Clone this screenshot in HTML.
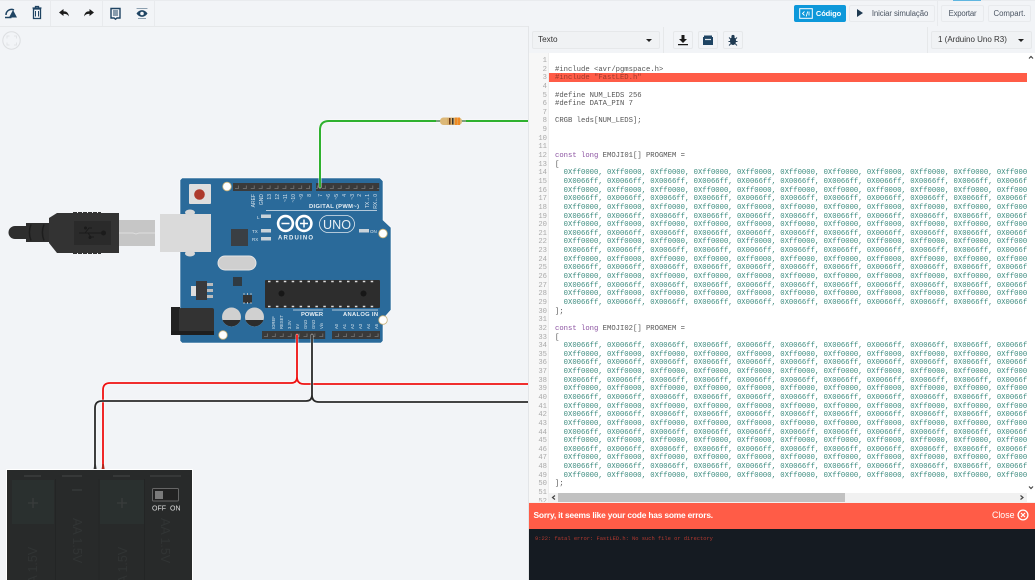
<!DOCTYPE html>
<html lang="pt"><head><meta charset="utf-8"><title>Circuit</title>
<style>
html,body{margin:0;padding:0;width:1035px;height:580px;overflow:hidden;background:#f2f4f7;font-family:"Liberation Sans",sans-serif}
.a{position:absolute;box-sizing:border-box}
.btn{position:absolute;box-sizing:border-box;top:5px;height:17px;background:#f2f4f7;border:1px solid #e8eaed;border-radius:2px;font-size:7.8px;line-height:15px;text-align:center;color:#4b5563;white-space:nowrap}
.sel{position:absolute;box-sizing:border-box;top:31px;height:18px;background:#f0f2f4;border:1px solid #e6e8ea;border-radius:2px;font-size:8.2px;line-height:16px;color:#333;padding-left:5px}
.sel i{position:absolute;right:7px;top:7px;border:3px solid transparent;border-top:3px solid #222;border-bottom:0}
.tb{position:absolute;box-sizing:border-box;top:31px;width:20px;height:18px;background:#f2f4f7;border:1px solid #e6e8ea;border-radius:2px}
#code{position:absolute;left:555px;top:57px;width:472px;height:445px;overflow:hidden;font:7.23px/8.64px "Liberation Mono",monospace;color:#555;white-space:pre;margin:0}
#nums{position:absolute;left:529px;top:57px;width:18px;height:445px;overflow:hidden;font:7.23px/8.64px "Liberation Mono",monospace;color:#a9a9a9;text-align:right;white-space:pre;margin:0}
#code b{font-weight:normal;color:#8b52a1}
#code u{text-decoration:none;color:#3a8a7d}
</style></head><body>

<!-- canvas drawing -->
<svg class="a" style="left:0;top:0" width="528" height="580" viewBox="0 0 528 580">
<defs>
<pattern id="pn" x="233" y="183" width="7.9" height="8" patternUnits="userSpaceOnUse"><rect width="7.9" height="8" fill="#3a3a3a"/><path d="M2 5.5h3.5v-3" stroke="#777" stroke-width=".8" fill="none"/></pattern>
<pattern id="pb" x="262" y="331" width="7.9" height="8" patternUnits="userSpaceOnUse"><rect width="7.9" height="8" fill="#3a3a3a"/><path d="M2 5.5h3.5v-3" stroke="#777" stroke-width=".8" fill="none"/></pattern>
</defs>
<circle cx="11.5" cy="40.5" r="8.7" fill="none" stroke="#dcdee1" stroke-width="1"/>
<path d="M7 38.5v-2.5h2.5M14 36h2.5v2.5M16.500 42.500v2.500h-2.500M9.500 45h-2.500v-2.500" fill="none" stroke="#e2e4e7" stroke-width="1"/>

<!-- USB cable -->
<path d="M26 226h-11a6.500 6.500 0 0 0 0 13h11z" fill="#2e2e2e"/>
<rect x="26" y="223" width="24" height="19" fill="#2e2e2e"/>
<path d="M31 224.500c-2 5-2 11 0 16M44 224.500c-2 5-2 11 0 16" stroke="#1d1d1d" stroke-width="1.500" fill="none"/>
<rect x="119" y="220" width="36" height="26" fill="#c6c6c6"/>
<path d="M119 233h14l3 1 3-1h16" stroke="#ddd" stroke-width="1" fill="none"/>
<path d="M49 218l8-5h62v40H57l-8-10z" fill="#333"/>
<rect x="74" y="221" width="37" height="24" fill="#2a2a2a"/>
<path d="M79 233h24M85 233l4-5h3M88 233l3 4h3" stroke="#1b1b1b" stroke-width="1" fill="none"/><circle cx="103.500" cy="233" r="2.500" fill="#1b1b1b"/><circle cx="85.500" cy="228" r="1.500" fill="#1b1b1b"/><circle cx="90" cy="237.500" r="1.500" fill="#1b1b1b"/>
<path d="M73 213h4v-1h-4zM78 213h4v-1h-4zM83 213h4v-1h-4zM88 213h4v-1h-4zM93 213h4v-1h-4zM98 213h3v-1h-3zM73 254h4v-1h-4zM78 254h4v-1h-4zM83 254h4v-1h-4zM88 254h4v-1h-4zM93 254h4v-1h-4zM98 254h3v-1h-3z" fill="#333"/>

<!-- board -->
<path d="M182 178H380l3 3v39l8 7.500V310l-8 9v22l-2 2H182l-2-2V180z" fill="#2a6a9a" stroke="#fff" stroke-width=".6"/>
<rect x="160" y="214" width="51" height="38" fill="#dadada"/>
<ellipse cx="190" cy="212.500" rx="5" ry="3" fill="#d8d8d8"/><ellipse cx="190" cy="253.500" rx="5" ry="3" fill="#d8d8d8"/>
<rect x="189" y="184" width="22" height="20" rx="1" fill="#dedede"/><circle cx="199.500" cy="194.500" r="5.300" fill="#ad3a2c"/>
<circle cx="227" cy="186.500" r="4.300" fill="#fff" stroke="#c9b27a" stroke-width=".8"/>
<circle cx="383" cy="233.500" r="4.300" fill="#fff" stroke="#c9b27a" stroke-width=".8"/>
<circle cx="383" cy="320" r="4.300" fill="#fff" stroke="#c9b27a" stroke-width=".8"/>
<circle cx="223" cy="335" r="4.300" fill="#fff" stroke="#c9b27a" stroke-width=".8"/>
<rect x="233" y="183" width="79" height="8" fill="url(#pn)"/>
<rect x="316" y="183" width="63.200" height="8" fill="url(#pn)"/>
<rect x="262" y="331" width="63.200" height="8" fill="url(#pb)"/>
<rect x="332" y="331" width="48" height="8" fill="url(#pb)"/>
<g fill="#d8e4ec" font-family="Liberation Sans" font-size="5">
<g text-anchor="end">
<text transform="translate(255,194) rotate(-90)">AREF</text><text transform="translate(263,194) rotate(-90)">GND</text>
<text transform="translate(271,194) rotate(-90)">13</text><text transform="translate(279,194) rotate(-90)">12</text>
<text transform="translate(287,194) rotate(-90)">~11</text><text transform="translate(295,194) rotate(-90)">~10</text>
<text transform="translate(303,194) rotate(-90)">~9</text><text transform="translate(311,194) rotate(-90)">8</text>
<text transform="translate(322,194) rotate(-90)">7</text><text transform="translate(330,194) rotate(-90)">~6</text>
<text transform="translate(338,194) rotate(-90)">~5</text><text transform="translate(346,194) rotate(-90)">4</text>
<text transform="translate(354,194) rotate(-90)">~3</text><text transform="translate(361,194) rotate(-90)">2</text>
<text transform="translate(369,194) rotate(-90)">TX→1</text><text transform="translate(377,194) rotate(-90)">RX←0</text>
</g>
<g font-size="4.200">
<text transform="translate(275,329) rotate(-90)">IOREF</text><text transform="translate(283,329) rotate(-90)">RESET</text>
<text transform="translate(291,329) rotate(-90)">3.3V</text><text transform="translate(299,329) rotate(-90)">5V</text>
<text transform="translate(307,329) rotate(-90)">GND</text><text transform="translate(315,329) rotate(-90)">GND</text>
<text transform="translate(323,329) rotate(-90)">Vin</text>
<text transform="translate(338,329) rotate(-90)">A0</text><text transform="translate(346,329) rotate(-90)">A1</text>
<text transform="translate(354,329) rotate(-90)">A2</text><text transform="translate(362,329) rotate(-90)">A3</text>
<text transform="translate(370,329) rotate(-90)">A4</text><text transform="translate(378,329) rotate(-90)">A5</text>
</g>
<text x="257" y="219" font-size="4.500">L</text><text x="252" y="233" font-size="4.500">TX</text><text x="252" y="241" font-size="4.500">RX</text><text x="370" y="233" font-size="4.500">ON</text>
</g>
<g fill="#e8eff4" font-family="Liberation Sans" font-weight="bold">
<text x="309" y="208" font-size="5.800" textLength="50">DIGITAL (PWM~)</text>
<text x="301" y="316" font-size="5.800" textLength="22">POWER</text>
<text x="343" y="316" font-size="5.800" textLength="35">ANALOG IN</text>
<text x="278" y="239.500" font-size="6" textLength="35">ARDUINO</text>
</g>
<path d="M266 210.500h111M293 310h30M332 310h46" stroke="#dfe8ee" stroke-width=".8"/>
<g fill="none" stroke="#fff" stroke-width="2.600"><circle cx="285.500" cy="223.500" r="7.400"/><circle cx="304" cy="223.500" r="7.400"/></g>
<path d="M281.500 223.500h8M300 223.500h8M304 219.500v8" stroke="#fff" stroke-width="1.500"/>
<rect x="319.500" y="215.500" width="35" height="17" rx="8.500" fill="none" stroke="#dfe8ee" stroke-width=".8"/>
<text x="323" y="229" font-family="Liberation Sans" font-size="13" fill="#e8eff4" textLength="28" lengthAdjust="spacingAndGlyphs">UNO</text>
<rect x="261" y="214.500" width="10" height="3.500" fill="#c9d3da"/><rect x="261" y="229" width="10" height="3.500" fill="#c9d3da"/><rect x="261" y="237" width="10" height="3.500" fill="#c9d3da"/><rect x="359" y="229" width="10" height="3.500" fill="#c9d3da"/>
<rect x="231" y="229" width="17" height="17" fill="#3a3f44"/>
<rect x="218" y="256" width="38" height="14" rx="7" fill="#cfcfcf" stroke="#e4e4e4"/>
<rect x="233" y="277" width="9" height="9" fill="#2f3a42"/>
<rect x="191" y="286" width="6" height="10" fill="#ddd"/><rect x="196" y="281" width="11" height="19" fill="#39393b"/>
<rect x="207" y="283" width="6" height="3" fill="#bbb"/><rect x="207" y="289" width="6" height="3" fill="#bbb"/><rect x="207" y="295" width="6" height="3" fill="#bbb"/>
<rect x="243" y="295" width="9" height="8" fill="#333"/>
<path d="M244 293v11M247.500 293v11M251 293v11" stroke="#ccc" stroke-width=".8" stroke-dasharray="2 7"/>
<rect x="171" y="307" width="9" height="28" fill="#222"/><rect x="179" y="308" width="35" height="26" rx="2" fill="#333"/><rect x="171" y="331" width="43" height="4" fill="#1e1e1e"/>
<circle cx="231.500" cy="317" r="9.500" fill="#d0d0d0"/><path d="M222.500 320a9.500 9.500 0 0 0 18 0z" fill="#2c2c2c"/>
<circle cx="254.500" cy="317" r="9.500" fill="#d0d0d0"/><path d="M245.500 320a9.500 9.500 0 0 0 18 0z" fill="#2c2c2c"/>
<rect x="265" y="280" width="115" height="28" rx="1" fill="#2d2d2d"/>
<path d="M268 281.500H378M268 306.500H378" stroke="#ddd" stroke-width="1.500" stroke-dasharray="2.500 5.400"/>
<circle cx="281.500" cy="293.500" r="3" fill="#171717"/><circle cx="363.500" cy="293.500" r="3" fill="#171717"/>

<!-- wires -->
<g fill="none" stroke-linecap="round">
<path d="M320 187V130q0-9 9-9H441M462 121H528" stroke="#fff" stroke-width="2.800"/>
<path d="M320 187V130q0-9 9-9H441M462 121H528" stroke="#2fb12f" stroke-width="2"/>
<path d="M297 335V377q0 6-6 6H110q-7 0-7 7V470M297 377q0 7 7 7H528" stroke="#fff" stroke-width="2.600"/>
<path d="M297 335V377q0 6-6 6H110q-7 0-7 7V470M297 377q0 7 7 7H528" stroke="#ee1111" stroke-width="1.800"/>
<path d="M312 335V395q0 6-6 6H102q-7 0-7 7V470M312 395q0 7 7 7H528" stroke="#fff" stroke-width="2.600"/>
<path d="M312 335V395q0 6-6 6H102q-7 0-7 7V470M312 395q0 7 7 7H528" stroke="#2a2a2a" stroke-width="1.800"/>
</g>
<!-- resistor -->
<path d="M436 121h30" stroke="#9a9a9a" stroke-width="1.400"/>
<rect x="440" y="117.500" width="22" height="7.500" rx="3.500" fill="#dcb878"/>
<rect x="447" y="118" width="8" height="6.500" fill="#d6ad6a"/>
<rect x="449" y="118" width="1.500" height="6.500" fill="#6b3a1a"/><rect x="452" y="118" width="1.500" height="6.500" fill="#333"/><rect x="455" y="117.500" width="2.500" height="7.500" fill="#f08a24"/><rect x="458" y="117.500" width="2" height="7.500" fill="#f08a24"/>

<!-- battery -->
<path d="M93.500 470l.8-6h1.600l.8 6z" fill="#333"/><path d="M101.500 470l.8-6h1.600l.8 6z" fill="#b3271c"/>
<rect x="6.500" y="469.500" width="186" height="112" fill="#282a2a" stroke="#fff" stroke-width="1"/>
<rect x="12" y="480" width="42" height="44" fill="#2a302f"/><rect x="100" y="480" width="44" height="44" fill="#2a302f"/>
<path d="M55.500 479V580M99 479V580M144.500 479V580" stroke="#232525" stroke-width="1"/>
<path d="M24 476h17M62 476h20M113 476h17M150 476h31" stroke="#3b3d3d" stroke-width="1.500"/>
<path d="M33 498v10M28 503h10M122 498v10M117 503h10M72 490h10" stroke="#393c3c" stroke-width="1.300"/>
<g fill="#313434" font-family="Liberation Sans" font-size="12.500">
<text transform="translate(73,518) rotate(90)">AA 1.5V</text>
<text transform="translate(161,518) rotate(90)">AA 1.5V</text>
<text transform="translate(37,592) rotate(-90)">AA 1.5V</text>
<text transform="translate(127,592) rotate(-90)">AA 1.5V</text>
</g>
<rect x="152.500" y="488.500" width="26" height="12.500" rx="1" fill="#222" stroke="#666" stroke-width="1"/>
<rect x="155" y="491" width="8" height="8" fill="#7a7a7a"/>
<text x="152" y="510.500" font-family="Liberation Sans" font-size="7" fill="#ddd">OFF</text>
<text x="170" y="510.500" font-family="Liberation Sans" font-size="7" fill="#ddd">ON</text>
</svg>

<!-- top toolbar -->
<div class="a" style="left:0;top:0;width:1035px;height:1px;background:#e9ebee"></div>
<div class="a" style="left:0;top:26px;width:528px;height:1px;background:#e6e8ea"></div>
<div class="a" style="left:50px;top:1px;width:1px;height:25px;background:#e8eaed"></div>
<div class="a" style="left:102px;top:1px;width:1px;height:25px;background:#e8eaed"></div>
<div class="a" style="left:154px;top:1px;width:1px;height:25px;background:#e8eaed"></div>
<svg class="a" style="left:0;top:0" width="160" height="26" viewBox="0 0 160 26">
<path d="M5 17.500h6.500M6 15a5.500 5.500 0 0 1 8-5" fill="none" stroke="#1f4463" stroke-width="1.500"/><path d="M9 17.500l4-7.500 4 7.500z" fill="#1f4463"/>
<path d="M33.500 9h7v9.500h-7zM32.500 8h9M35.500 8V6.500h3V8" fill="none" stroke="#1f4463" stroke-width="1.300"/><path d="M35.500 11v5.500M38.500 11v5.500" stroke="#1f4463"/>
<path d="M59 12.500l4.500-3.500v2.200c3 0 5 1.500 5.500 5.300-1.300-2-3-2.600-5.500-2.600V16z" fill="#1b1b1b"/>
<path d="M94 12.500L89.500 9v2.200c-3 0-5 1.500-5.500 5.300 1.300-2 3-2.600 5.500-2.600V16z" fill="#1b1b1b"/>
<path d="M111 8.500h9v9.500h-3l-1.500 1.200-1.500-1.200h-3z" fill="none" stroke="#1f4463" stroke-width="1.400"/><path d="M113 11h5M113 13h5M113 15h5" stroke="#1f4463" stroke-width=".9"/>
<path d="M136.500 13.500c3-4.500 8-4.500 11 0-3 4.500-8 4.500-11 0z" fill="#1f4463"/><circle cx="142" cy="13.500" r="1.800" fill="#f2f4f7"/>
<path d="M137 9v-.5h10V9M138 18.500h8" stroke="#8da0b0" stroke-width=".9" fill="none"/>
</svg>

<div class="a" style="left:953px;top:0;width:28px;height:1px;background:#5fb6e0"></div>
<div class="btn" style="left:794px;width:52px;background:#0d98da;border-color:#0d98da;color:#fff;font-weight:bold;font-size:7.5px;letter-spacing:-.1px;padding-left:17px">Código</div>
<svg class="a" style="left:799px;top:8px" width="14" height="11" viewBox="0 0 14 11"><rect x=".7" y=".7" width="12.600" height="9.600" fill="none" stroke="#fff" stroke-width="1"/><path d="M5.500 3.500L3.500 5.500l2 2M8.700 3.500l-1.500 5M10 3.500v4" fill="none" stroke="#fff" stroke-width=".9"/></svg>
<div class="btn" style="left:849px;width:86px;padding-left:16px;font-size:7.8px;letter-spacing:-.1px">Iniciar simulação</div>
<div class="a" style="left:857px;top:9px;border-left:6px solid #1f3a52;border-top:4.500px solid transparent;border-bottom:4.500px solid transparent"></div>
<div class="a" style="left:937px;top:1px;width:1px;height:25px;background:#e8eaed"></div>
<div class="btn" style="left:941px;width:43px;letter-spacing:-.2px">Exportar</div>
<div class="btn" style="left:988px;width:43px">Compart.</div>

<!-- code panel -->
<div class="a" style="left:528px;top:26px;width:1px;height:554px;background:#e3e5e8"></div>
<div class="a" style="left:529px;top:27px;width:506px;height:26px;background:#f2f4f7"></div>
<div class="sel" style="left:532px;width:128px">Texto<i></i></div>
<div class="a" style="left:663px;top:27px;width:1px;height:26px;background:#e6e8ea"></div>
<div class="tb" style="left:673px"></div><div class="tb" style="left:698px"></div><div class="tb" style="left:723px"></div>
<svg class="a" style="left:673px;top:31px" width="70" height="18" viewBox="0 0 70 18">
<path d="M8.500 4h3v4h2.500L10 12 6 8h2.500zM5 13h10v1.300H5z" fill="#1a1a1a"/>
<path d="M30 6h10v8H30z" fill="#1f4463"/><path d="M31 4.500h8V6h-8z" fill="#1f4463"/><path d="M32 8.500h6" stroke="#dfe5ea" stroke-width="1.200"/>
<ellipse cx="60" cy="10" rx="3" ry="4" fill="#1f3a52"/><circle cx="60" cy="5.500" r="1.600" fill="#1f3a52"/>
<path d="M56 6.500l2 2M64 6.500l-2 2M55.500 10.500h2M64.500 10.500h-2M56 14.500l2-2M64 14.500l-2-2" stroke="#1f3a52" stroke-width=".9"/>
</svg>
<div class="a" style="left:927px;top:27px;width:1px;height:26px;background:#e6e8ea"></div>
<div class="sel" style="left:931px;width:101px;padding-left:6px;font-size:8px">1 (Arduino Uno R3)<i></i></div>

<div class="a" style="left:529px;top:53px;width:506px;height:449px;background:#fff"></div>
<div class="a" style="left:529px;top:53px;width:20px;height:449px;background:#f7f7f7;border-right:1px solid #eee"></div>
<div class="a" style="left:549px;top:72.800px;width:478px;height:9px;background:#ff5c47"></div>

<pre id="nums">1
2
3
4
5
6
7
8
9
10
11
12
13
14
15
16
17
18
19
20
21
22
23
24
25
26
27
28
29
30
31
32
33
34
35
36
37
38
39
40
41
42
43
44
45
46
47
48
49
50
51
52</pre>

<pre id="code">

#include &lt;avr/pgmspace.h&gt;
<span style="color:#9a3a2c">#include "FastLED.h"</span>

#define NUM_LEDS 256
#define DATA_PIN 7

CRGB leds[NUM_LEDS];



<b>const long</b> EMOJI01[] PROGMEM =
[
<u>  0Xff0000, 0Xff0000, 0Xff0000, 0Xff0000, 0Xff0000, 0Xff0000, 0Xff0000, 0Xff0000, 0Xff0000, 0Xff0000, 0Xff0000,</u>
<u>  0X0066ff, 0X0066ff, 0X0066ff, 0X0066ff, 0X0066ff, 0X0066ff, 0X0066ff, 0X0066ff, 0X0066ff, 0X0066ff, 0X0066ff,</u>
<u>  0Xff0000, 0Xff0000, 0Xff0000, 0Xff0000, 0Xff0000, 0Xff0000, 0Xff0000, 0Xff0000, 0Xff0000, 0Xff0000, 0Xff0000,</u>
<u>  0X0066ff, 0X0066ff, 0X0066ff, 0X0066ff, 0X0066ff, 0X0066ff, 0X0066ff, 0X0066ff, 0X0066ff, 0X0066ff, 0X0066ff,</u>
<u>  0Xff0000, 0Xff0000, 0Xff0000, 0Xff0000, 0Xff0000, 0Xff0000, 0Xff0000, 0Xff0000, 0Xff0000, 0Xff0000, 0Xff0000,</u>
<u>  0X0066ff, 0X0066ff, 0X0066ff, 0X0066ff, 0X0066ff, 0X0066ff, 0X0066ff, 0X0066ff, 0X0066ff, 0X0066ff, 0X0066ff,</u>
<u>  0Xff0000, 0Xff0000, 0Xff0000, 0Xff0000, 0Xff0000, 0Xff0000, 0Xff0000, 0Xff0000, 0Xff0000, 0Xff0000, 0Xff0000,</u>
<u>  0X0066ff, 0X0066ff, 0X0066ff, 0X0066ff, 0X0066ff, 0X0066ff, 0X0066ff, 0X0066ff, 0X0066ff, 0X0066ff, 0X0066ff,</u>
<u>  0Xff0000, 0Xff0000, 0Xff0000, 0Xff0000, 0Xff0000, 0Xff0000, 0Xff0000, 0Xff0000, 0Xff0000, 0Xff0000, 0Xff0000,</u>
<u>  0X0066ff, 0X0066ff, 0X0066ff, 0X0066ff, 0X0066ff, 0X0066ff, 0X0066ff, 0X0066ff, 0X0066ff, 0X0066ff, 0X0066ff,</u>
<u>  0Xff0000, 0Xff0000, 0Xff0000, 0Xff0000, 0Xff0000, 0Xff0000, 0Xff0000, 0Xff0000, 0Xff0000, 0Xff0000, 0Xff0000,</u>
<u>  0X0066ff, 0X0066ff, 0X0066ff, 0X0066ff, 0X0066ff, 0X0066ff, 0X0066ff, 0X0066ff, 0X0066ff, 0X0066ff, 0X0066ff,</u>
<u>  0Xff0000, 0Xff0000, 0Xff0000, 0Xff0000, 0Xff0000, 0Xff0000, 0Xff0000, 0Xff0000, 0Xff0000, 0Xff0000, 0Xff0000,</u>
<u>  0X0066ff, 0X0066ff, 0X0066ff, 0X0066ff, 0X0066ff, 0X0066ff, 0X0066ff, 0X0066ff, 0X0066ff, 0X0066ff, 0X0066ff,</u>
<u>  0Xff0000, 0Xff0000, 0Xff0000, 0Xff0000, 0Xff0000, 0Xff0000, 0Xff0000, 0Xff0000, 0Xff0000, 0Xff0000, 0Xff0000,</u>
<u>  0X0066ff, 0X0066ff, 0X0066ff, 0X0066ff, 0X0066ff, 0X0066ff, 0X0066ff, 0X0066ff, 0X0066ff, 0X0066ff, 0X0066ff,</u>
];

<b>const long</b> EMOJI02[] PROGMEM =
[
<u>  0X0066ff, 0X0066ff, 0X0066ff, 0X0066ff, 0X0066ff, 0X0066ff, 0X0066ff, 0X0066ff, 0X0066ff, 0X0066ff, 0X0066ff,</u>
<u>  0Xff0000, 0Xff0000, 0Xff0000, 0Xff0000, 0Xff0000, 0Xff0000, 0Xff0000, 0Xff0000, 0Xff0000, 0Xff0000, 0Xff0000,</u>
<u>  0X0066ff, 0X0066ff, 0X0066ff, 0X0066ff, 0X0066ff, 0X0066ff, 0X0066ff, 0X0066ff, 0X0066ff, 0X0066ff, 0X0066ff,</u>
<u>  0Xff0000, 0Xff0000, 0Xff0000, 0Xff0000, 0Xff0000, 0Xff0000, 0Xff0000, 0Xff0000, 0Xff0000, 0Xff0000, 0Xff0000,</u>
<u>  0X0066ff, 0X0066ff, 0X0066ff, 0X0066ff, 0X0066ff, 0X0066ff, 0X0066ff, 0X0066ff, 0X0066ff, 0X0066ff, 0X0066ff,</u>
<u>  0Xff0000, 0Xff0000, 0Xff0000, 0Xff0000, 0Xff0000, 0Xff0000, 0Xff0000, 0Xff0000, 0Xff0000, 0Xff0000, 0Xff0000,</u>
<u>  0X0066ff, 0X0066ff, 0X0066ff, 0X0066ff, 0X0066ff, 0X0066ff, 0X0066ff, 0X0066ff, 0X0066ff, 0X0066ff, 0X0066ff,</u>
<u>  0Xff0000, 0Xff0000, 0Xff0000, 0Xff0000, 0Xff0000, 0Xff0000, 0Xff0000, 0Xff0000, 0Xff0000, 0Xff0000, 0Xff0000,</u>
<u>  0X0066ff, 0X0066ff, 0X0066ff, 0X0066ff, 0X0066ff, 0X0066ff, 0X0066ff, 0X0066ff, 0X0066ff, 0X0066ff, 0X0066ff,</u>
<u>  0Xff0000, 0Xff0000, 0Xff0000, 0Xff0000, 0Xff0000, 0Xff0000, 0Xff0000, 0Xff0000, 0Xff0000, 0Xff0000, 0Xff0000,</u>
<u>  0X0066ff, 0X0066ff, 0X0066ff, 0X0066ff, 0X0066ff, 0X0066ff, 0X0066ff, 0X0066ff, 0X0066ff, 0X0066ff, 0X0066ff,</u>
<u>  0Xff0000, 0Xff0000, 0Xff0000, 0Xff0000, 0Xff0000, 0Xff0000, 0Xff0000, 0Xff0000, 0Xff0000, 0Xff0000, 0Xff0000,</u>
<u>  0X0066ff, 0X0066ff, 0X0066ff, 0X0066ff, 0X0066ff, 0X0066ff, 0X0066ff, 0X0066ff, 0X0066ff, 0X0066ff, 0X0066ff,</u>
<u>  0Xff0000, 0Xff0000, 0Xff0000, 0Xff0000, 0Xff0000, 0Xff0000, 0Xff0000, 0Xff0000, 0Xff0000, 0Xff0000, 0Xff0000,</u>
<u>  0X0066ff, 0X0066ff, 0X0066ff, 0X0066ff, 0X0066ff, 0X0066ff, 0X0066ff, 0X0066ff, 0X0066ff, 0X0066ff, 0X0066ff,</u>
<u>  0Xff0000, 0Xff0000, 0Xff0000, 0Xff0000, 0Xff0000, 0Xff0000, 0Xff0000, 0Xff0000, 0Xff0000, 0Xff0000, 0Xff0000,</u>
];
</pre>

<!-- scrollbars -->
<div class="a" style="left:549px;top:493px;width:478px;height:9px;background:#f1f1f1"></div>
<div class="a" style="left:558px;top:493px;width:287px;height:9px;background:#c1c1c1"></div>
<svg class="a" style="left:549px;top:493px" width="486" height="9" viewBox="0 0 486 9"><path d="M6 2.500L3.500 4.500 6 6.500M471.500 2.500L474 4.500 471.500 6.500" fill="none" stroke="#444" stroke-width="1.200"/></svg>
<div class="a" style="left:1027px;top:53px;width:8px;height:449px;background:#fff"></div>
<svg class="a" style="left:1027px;top:53px" width="8" height="440" viewBox="0 0 8 440"><path d="M2 5.500L4 3.500 6 5.500M2 433.500L4 435.500 6 433.500" fill="none" stroke="#444" stroke-width="1.200"/></svg>

<!-- error bar -->
<div class="a" style="left:529px;top:502px;width:506px;height:27px;background:#ff5c47;border-top:1px solid #f6f0ee;color:#fff;font-size:8.400px;letter-spacing:-.18px;font-weight:bold;line-height:25px;padding-left:4.500px">Sorry, it seems like your code has some errors.</div>
<div class="a" style="left:992px;top:503px;width:24px;height:25px;color:#fff;font-size:8.800px;line-height:25px">Close</div>
<svg class="a" style="left:1016px;top:508px" width="14" height="14" viewBox="0 0 14 14"><circle cx="7" cy="7" r="4.900" fill="none" stroke="#fff" stroke-width="1.300"/><path d="M5 5l4 4M9 5l-4 4" stroke="#fff" stroke-width="1.200"/></svg>
<div class="a" style="left:529px;top:529px;width:506px;height:51px;background:#151b22"></div>
<div class="a" style="left:535px;top:535px;font:5.400px/8px 'Liberation Mono',monospace;color:#b5392f;white-space:pre">9:22: fatal error: FastLED.h: No such file or directory</div>
</body></html>
